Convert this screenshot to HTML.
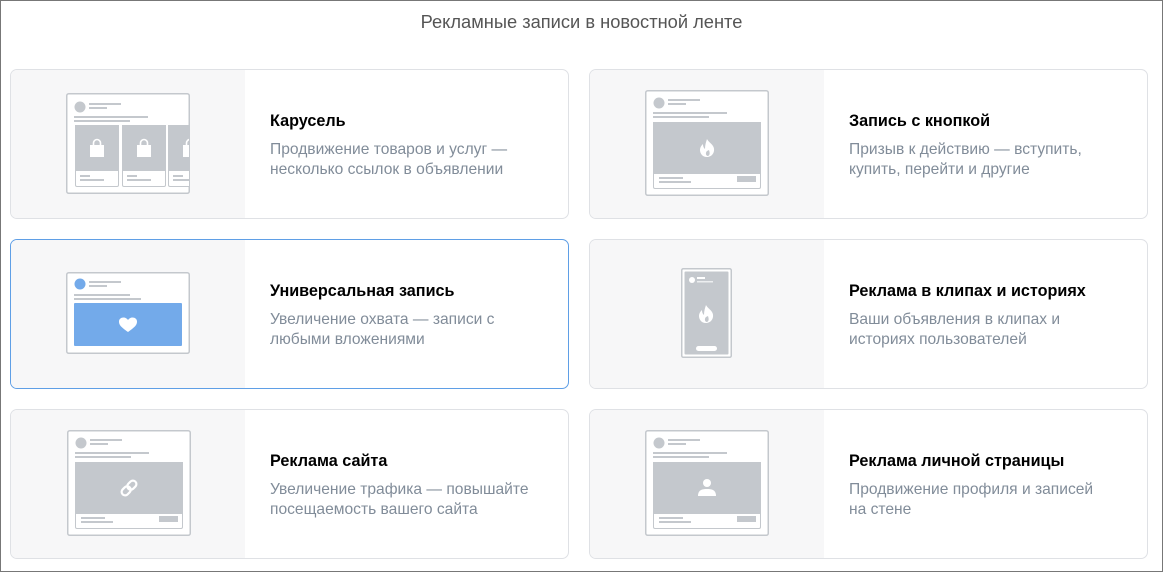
<!DOCTYPE html>
<html><head><meta charset="utf-8"><style>
html,body{margin:0;padding:0}
body{width:1163px;height:572px;overflow:hidden;background:#fff;font-family:"Liberation Sans",Arial,sans-serif;position:relative}
.frame{position:absolute;left:0;top:0;width:1161px;height:570px;border:1px solid #777;}
h1{position:absolute;left:0;width:1163px;top:11px;margin:0;text-align:center;font-size:18.3px;font-weight:normal;color:#555}
.card{position:absolute;width:557px;height:148px;border:1px solid #dfe1e5;border-radius:7px;background:#fff;overflow:hidden}
.card.sel{border-color:#5f9fe6}
.card svg{position:absolute;left:0;top:0}
.t{position:absolute;left:259px;top:42px;font-size:16.2px;font-weight:bold;color:#000}
.d{position:absolute;left:259px;top:70px;font-size:15.6px;line-height:20px;color:#818c99}
</style></head><body>
<div class="frame"></div>
<h1>Рекламные записи в новостной ленте</h1>
<svg width="0" height="0" style="position:absolute">
<defs>
<g id="post">
<rect x="0.75" y="0.75" width="122.5" height="104.5" rx="2" fill="#fff" stroke="#c4c8cd" stroke-width="1.5"/>
<circle cx="14" cy="13" r="5.5" fill="#c4c8cd"/>
<rect x="23" y="9" width="32" height="2" fill="#c4c8cd"/><rect x="23" y="13" width="18" height="2" fill="#c4c8cd"/>
<rect x="8" y="22" width="74" height="2" fill="#c4c8cd"/><rect x="8" y="26" width="56" height="2" fill="#c4c8cd"/>
<rect x="8.5" y="32.5" width="107" height="66" rx="1.5" fill="#fff" stroke="#c4c8cd"/>
<rect x="8" y="32" width="108" height="52" fill="#c4c8cd"/>
<rect x="14" y="87" width="24" height="2" fill="#c4c8cd"/><rect x="14" y="91" width="32" height="2" fill="#c4c8cd"/>
<rect x="92" y="86" width="19" height="6" fill="#c4c8cd"/>
</g>
<path id="flame" d="M0,-9 C2,-5 8,-3 7,3 C6,8 2,9 0,9 C-5,9 -7,5 -7,2 C-7,-1 -5,-3 -4,-4 C-4,-1 -3,0 -2,1 C-2,-3 -1,-6 0,-9 Z M0,3 C-2,5 -1,8 1,8 C3,7 3,5 2,2 Z" fill="#fff" fill-rule="evenodd"/>
</defs></svg>

<div class="card" style="left:10px;top:69px">
<svg width="557" height="148"><rect width="234" height="148" fill="#f7f7f8"/>
<g transform="translate(55,23)">
<rect x="0.75" y="0.75" width="122.5" height="99.5" rx="2" fill="#fff" stroke="#c4c8cd" stroke-width="1.5"/>
<circle cx="14" cy="14" r="5.5" fill="#c4c8cd"/>
<rect x="23" y="10" width="32" height="2" fill="#c4c8cd"/><rect x="23" y="14" width="18" height="2" fill="#c4c8cd"/>
<rect x="8" y="23" width="74" height="2" fill="#c4c8cd"/><rect x="8" y="27" width="56" height="2" fill="#c4c8cd"/>
<svg x="0" y="0" width="123" height="101">
<g id="prod"><rect x="9.5" y="32.5" width="43" height="61" rx="1.5" fill="#fff" stroke="#c4c8cd"/><rect x="9" y="32" width="44" height="46" fill="#c4c8cd"/>
<rect x="14" y="82" width="10" height="2" fill="#c4c8cd"/><rect x="14" y="86" width="24" height="2" fill="#c4c8cd"/>
<path d="M24,52 h14 v12 h-14 z" fill="#fff"/><path d="M27.5,52 v-2 a3.5,3.5 0 0 1 7,0 v2" fill="none" stroke="#fff" stroke-width="1.6"/></g>
<use href="#prod" x="47"/><use href="#prod" x="93"/>
</svg></g>
</svg>
<div class="t">Карусель</div>
<div class="d">Продвижение товаров и услуг —<br>несколько ссылок в объявлении</div>
</div>

<div class="card" style="left:589px;top:69px">
<svg width="557" height="148"><rect width="234" height="148" fill="#f7f7f8"/>
<use href="#post" x="55" y="20"/>
<use href="#flame" x="117" y="78"/>
</svg>
<div class="t">Запись с кнопкой</div>
<div class="d">Призыв к действию — вступить,<br>купить, перейти и другие</div>
</div>

<div class="card sel" style="left:10px;top:239px">
<svg width="557" height="148"><rect width="234" height="148" fill="#f7f7f8"/>
<g transform="translate(55,32)">
<rect x="0.75" y="0.75" width="122.5" height="80.5" rx="2" fill="#fff" stroke="#c4c8cd" stroke-width="1.5"/>
<circle cx="14" cy="12" r="5.5" fill="#73aaea"/>
<rect x="23" y="9" width="32" height="2" fill="#c4c8cd"/><rect x="23" y="13" width="18" height="2" fill="#c4c8cd"/>
<rect x="8" y="22" width="56" height="2" fill="#c4c8cd"/><rect x="8" y="26" width="67" height="2" fill="#c4c8cd"/>
<rect x="8" y="31" width="108" height="43" rx="1" fill="#73aaea"/>
<path d="M62,60 C55,55 53,53 53,49.5 C53,47 55,45.5 57.5,45.5 C59.5,45.5 61,46.5 62,48 C63,46.5 64.5,45.5 66.5,45.5 C69,45.5 71,47 71,49.5 C71,53 69,55 62,60 Z" fill="#fff"/>
</g>
</svg>
<div class="t">Универсальная запись</div>
<div class="d">Увеличение охвата — записи с<br>любыми вложениями</div>
</div>

<div class="card" style="left:589px;top:239px">
<svg width="557" height="148"><rect width="234" height="148" fill="#f7f7f8"/>
<rect x="91.75" y="28.75" width="49.5" height="88.5" rx="1.5" fill="#fff" stroke="#c4c8cd" stroke-width="1.5"/>
<rect x="94.5" y="31.5" width="44" height="83" rx="1" fill="#c4c8cd"/>
<circle cx="102" cy="40" r="3" fill="#fff"/>
<rect x="107" y="37" width="8" height="2" fill="#fff"/><rect x="107" y="41" width="16" height="1.5" fill="#eceef0"/>
<use href="#flame" x="116" y="74"/>
<rect x="106" y="106" width="21" height="5" rx="2.5" fill="#fff"/>
</svg>
<div class="t">Реклама в клипах и историях</div>
<div class="d">Ваши объявления в клипах и<br>историях пользователей</div>
</div>

<div class="card" style="left:10px;top:409px">
<svg width="557" height="148"><rect width="234" height="148" fill="#f7f7f8"/>
<use href="#post" x="56" y="20"/>
<g transform="translate(118,78) rotate(-45)" fill="none" stroke="#fff" stroke-width="2.2">
<rect x="-9" y="-3.5" width="10" height="7" rx="3.5"/><rect x="-1" y="-3.5" width="10" height="7" rx="3.5"/>
</g>
</svg>
<div class="t">Реклама сайта</div>
<div class="d">Увеличение трафика — повышайте<br>посещаемость вашего сайта</div>
</div>

<div class="card" style="left:589px;top:409px">
<svg width="557" height="148"><rect width="234" height="148" fill="#f7f7f8"/>
<use href="#post" x="55" y="20"/>
<circle cx="117" cy="73" r="4" fill="#fff"/>
<path d="M108,86 C108,80 112,79 117,79 C122,79 126,80 126,86 Z" fill="#fff"/>
</svg>
<div class="t">Реклама личной страницы</div>
<div class="d">Продвижение профиля и записей<br>на стене</div>
</div>
</body></html>
